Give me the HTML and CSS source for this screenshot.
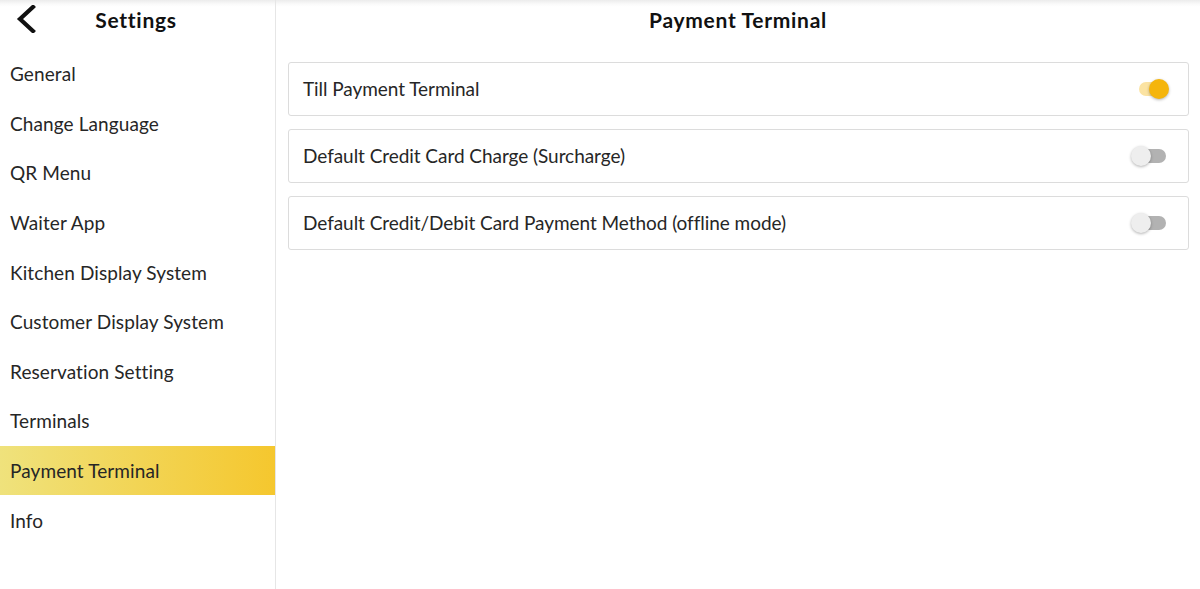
FILE: index.html
```html
<!DOCTYPE html>
<html>
<head>
<meta charset="utf-8">
<link rel="stylesheet" href="styles.css">
</head>
<body>
<div class="app">
  <aside class="sidebar">
    <div class="side-head">
      <span class="back">
        <svg width="24" height="28" viewBox="0 0 24 28"><path d="M19 2 L6 14 L19 26" fill="none" stroke="#111" stroke-width="4.2" stroke-linecap="square"/></svg>
      </span>
      <h1 class="side-title">Settings</h1>
    </div>
    <nav class="menu">
      <div class="item">General</div>
      <div class="item">Change Language</div>
      <div class="item">QR Menu</div>
      <div class="item">Waiter App</div>
      <div class="item">Kitchen Display System</div>
      <div class="item">Customer Display System</div>
      <div class="item">Reservation Setting</div>
      <div class="item">Terminals</div>
      <div class="item active">Payment Terminal</div>
      <div class="item">Info</div>
    </nav>
  </aside>
  <main class="content">
    <h2 class="title">Payment Terminal</h2>
    <div class="cards">
      <div class="card"><span>Till Payment Terminal</span><span class="switch on"><span class="track"></span><span class="thumb"></span></span></div>
      <div class="card"><span>Default Credit Card Charge (Surcharge)</span><span class="switch"><span class="track"></span><span class="thumb"></span></span></div>
      <div class="card"><span>Default Credit/Debit Card Payment Method (offline mode)</span><span class="switch"><span class="track"></span><span class="thumb"></span></span></div>
    </div>
  </main>
</div>
</body>
</html>
```
FILE: styles.css
```css
html, body { margin: 0; padding: 0; }
body {
  font-family: "Lato", "Noto Sans", sans-serif;
  color: #222;
  background: #fff;
  width: 1200px;
  height: 589px;
  overflow: hidden;
}
.app {
  display: flex;
  height: 589px;
  background: linear-gradient(to bottom, #ececec 0, #fafafa 4px, #fff 7px);
}
.sidebar {
  width: 275px;
  border-right: 1px solid #e6e6e6;
  flex-shrink: 0;
}
.side-head {
  height: 49px;
  display: flex;
  align-items: center;
  position: relative;
}
.back {
  position: absolute;
  left: 14px;
  top: 5px;
}
.side-title {
  margin: 0;
  width: 100%;
  text-align: center;
  font-size: 21px;
  font-weight: 700;
  letter-spacing: 0.7px;
  color: #111;
  padding-right: 3px;
  margin-top: -10px;
}
.menu { display: flex; flex-direction: column; }
.item {
  height: 49.6px;
  display: flex;
  align-items: center;
  padding-left: 10px;
  font-size: 19px;
  letter-spacing: 0.1px;
  color: #262626;
}
.item.active {
  background: linear-gradient(to right, #efe27c, #f5c72e);
}
.content { flex: 1; }
.title {
  margin: 0;
  height: 40px;
  line-height: 40px;
  text-align: center;
  font-size: 21px;
  font-weight: 700;
  letter-spacing: 0.7px;
  color: #111;
}
.cards {
  display: flex;
  flex-direction: column;
  gap: 13px;
  padding: 22px 11px 0 12px;
}
.card {
  height: 52px;
  border: 1px solid #dcdcdc;
  border-radius: 3px;
  display: flex;
  align-items: center;
  justify-content: space-between;
  padding: 0 19px 0 14px;
  font-size: 19px;
  letter-spacing: -0.05px;
  color: #262626;
}
.card > span:first-child { margin-top: -1px; }
.switch {
  position: relative;
  width: 38px;
  height: 20px;
}
.track {
  position: absolute;
  left: 6px;
  top: 3px;
  width: 29px;
  height: 14px;
  border-radius: 7px;
  background: #b2b2b2;
}
.thumb {
  position: absolute;
  left: 0;
  top: 0;
  width: 20px;
  height: 20px;
  border-radius: 50%;
  background: #eeeeee;
  box-shadow: 0 1px 3px rgba(0,0,0,0.3);
}
.switch.on .track { background: #fbe3a2; left: 8px; width: 28px; }
.switch.on .thumb { left: 18px; background: #f5b50c; }
```
